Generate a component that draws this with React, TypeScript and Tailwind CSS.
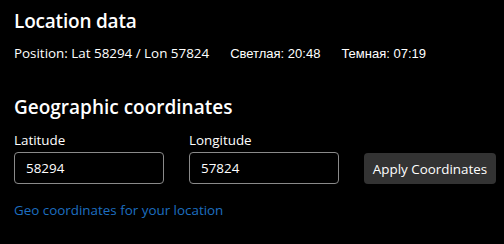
import React from "react";

export default function App() {
  return (
    <div
      className="w-[504px] h-[244px] bg-black text-white pl-[14px] pt-[7px] overflow-hidden"
      style={{ fontFamily: '"Open Sans", sans-serif' }}
    >
      <h1 className="text-[19px] leading-[28px] font-semibold tracking-[-0.2px]">Location data</h1>
      <div className="mt-[8px] flex items-baseline text-[13.4px] leading-[20px]">
        <span>Position: Lat 58294 / Lon 57824</span>
        <span className="ml-[21px] font-['Liberation_Sans',sans-serif] text-[13px]">Светлая: 20:48</span>
        <span className="ml-[21px] font-['Liberation_Sans',sans-serif] text-[13px]">Темная: 07:19</span>
      </div>
      <h2 className="mt-[29px] text-[19px] leading-[28px] font-semibold">Geographic coordinates</h2>
      <div className="mt-[9px] flex items-end gap-[25px] text-[13.4px]">
        <label className="flex flex-col">
          <span className="leading-[20px]">Latitude</span>
          <input
            defaultValue="58294"
            className="mt-[2px] w-[150px] h-[32px] rounded-[4px] border border-[#8a8a8a] bg-black px-[11px] text-white text-[13.4px] outline-none"
          />
        </label>
        <label className="flex flex-col">
          <span className="leading-[20px]">Longitude</span>
          <input
            defaultValue="57824"
            className="mt-[2px] w-[150px] h-[32px] rounded-[4px] border border-[#8a8a8a] bg-black px-[11px] text-white text-[13.4px] outline-none"
          />
        </label>
        <button className="h-[31px] w-[132px] rounded-[4px] bg-[#333333] text-white text-[13.4px] leading-[20px]">
          Apply Coordinates
        </button>
      </div>
      <a className="mt-[16px] block w-fit text-[13.4px] leading-[20px] text-[#1d6fc0]" href="#">
        Geo coordinates for your location
      </a>
    </div>
  );
}
